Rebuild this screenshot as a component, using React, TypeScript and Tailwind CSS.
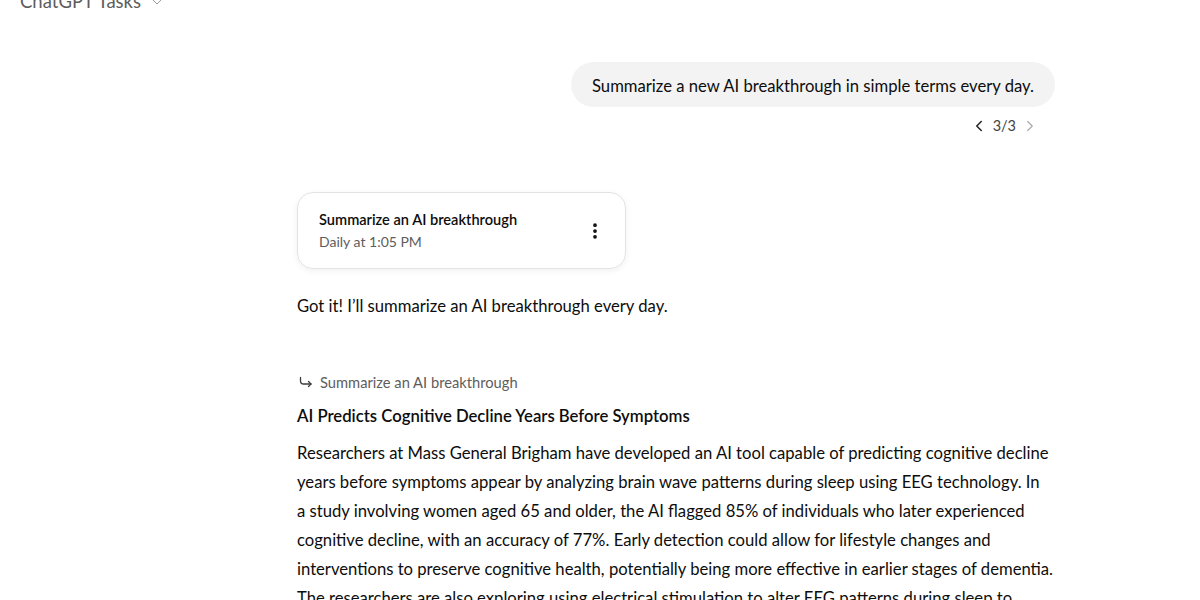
import { ChevronLeft, ChevronRight, ChevronDown, EllipsisVertical } from "lucide-react";

const lines = [
  "Researchers at Mass General Brigham have developed an AI tool capable of predicting cognitive decline",
  "years before symptoms appear by analyzing brain wave patterns during sleep using EEG technology. In",
  "a study involving women aged 65 and older, the AI flagged 85% of individuals who later experienced",
  "cognitive decline, with an accuracy of 77%. Early detection could allow for lifestyle changes and",
  "interventions to preserve cognitive health, potentially being more effective in earlier stages of dementia.",
  "The researchers are also exploring using electrical stimulation to alter EEG patterns during sleep to",
];

function HookArrow() {
  return (
    <svg width="14" height="12" viewBox="0 0 14 12" fill="none" stroke="currentColor" strokeWidth="1.3" strokeLinecap="round" strokeLinejoin="round" className="ml-[2px] text-[#3d3d3d]">
      <path d="M1.5 1.5v3.5a3 3 0 0 0 3 3h7.5" />
      <path d="M9.5 5.5l2.5 2.5-2.5 2.5" />
    </svg>
  );
}

export default function App() {
  return (
    <div className="w-[1200px] h-[600px] overflow-hidden bg-white text-[#0d0d0d] font-['Lato','Noto_Sans',sans-serif] relative">
      <div className="absolute left-[20px] -top-[12px] flex items-center gap-2 text-[18.5px] text-[#5d5d5d]">
        <span>ChatGPT Tasks</span>
        <ChevronDown className="size-4 text-[#9b9b9b]" strokeWidth={1.5} />
      </div>

      <div className="w-[758px] ml-[297px] pt-[62px] flex flex-col">
        <div className="flex flex-col items-end">
          <div className="h-[45px] rounded-[23px] bg-[#f3f3f3] px-[21px] pt-[3px] flex items-center text-[16.65px]">
            Summarize a new AI breakthrough in simple terms every day.
          </div>
          <div className="mt-[8px] mr-[16px] flex items-center gap-[5px] h-[22px] text-[14.5px] text-[#444]">
            <ChevronLeft className="size-[18px] text-[#222]" strokeWidth={2} />
            <span>3/3</span>
            <ChevronRight className="size-[18px] text-[#aaa]" strokeWidth={1.6} />
          </div>
        </div>

        <div className="mt-[55px] w-[329px] h-[77px] rounded-[16px] border border-[#e3e3e3] shadow-[0_2px_6px_rgba(0,0,0,0.06)] flex items-center justify-between pl-[21px] pr-[20px]">
          <div className="flex flex-col leading-[22px]">
            <span className="text-[14.6px] font-semibold text-[#0d0d0d]">Summarize an AI breakthrough</span>
            <span className="text-[14px] text-[#5d5d5d]">Daily at 1:05 PM</span>
          </div>
          <EllipsisVertical className="size-[20px] text-[#0d0d0d]" strokeWidth={2.5} />
        </div>

        <p className="mt-[24px] text-[16.65px] leading-[26px]">Got it! I’ll summarize an AI breakthrough every day.</p>

        <div className="mt-[52px] flex items-center gap-[7px] text-[14.7px] text-[#5d5d5d] leading-[22px]">
          <HookArrow />
          <span>Summarize an AI breakthrough</span>
        </div>

        <h3 className="mt-[11px] text-[16.7px] font-semibold leading-[24px]">AI Predicts Cognitive Decline Years Before Symptoms</h3>

        <div className="mt-[11px] text-[16.65px] leading-[29px]">
          {lines.map((l) => (
            <div key={l} className="whitespace-nowrap">{l}</div>
          ))}
        </div>
      </div>
    </div>
  );
}
